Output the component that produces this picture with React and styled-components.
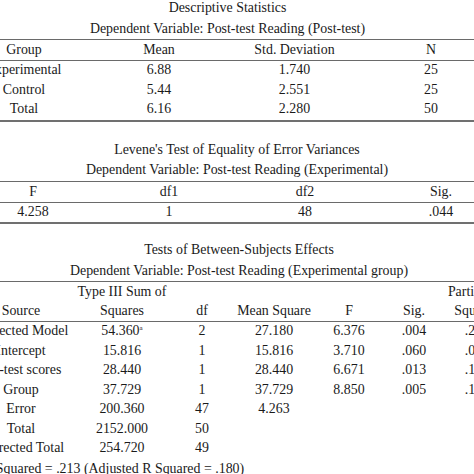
import React from "react";
import styled, { createGlobalStyle } from "styled-components";

const GlobalStyle = createGlobalStyle`
  html, body {
    margin: 0;
    padding: 0;
    background: #ffffff;
    overflow: hidden;
  }
  body {
    font-family: "Liberation Serif", "Times New Roman", serif;
    font-size: 13.9px;
    color: #1a1a1a;
  }
`;

const Page = styled.div`
  width: 474px;
  height: 474px;
  overflow: hidden;
  display: flex;
  flex-direction: column;
`;

const Section = styled.section`
  flex: none;
  width: ${(p) => p.$width}px;
  margin-left: ${(p) => p.$offset}px;
  margin-top: ${(p) => p.$gap}px;
`;

const Title = styled.div`
  text-align: center;
  line-height: 20.5px;
  white-space: nowrap;
`;

const Table = styled.table`
  width: 100%;
  border-collapse: collapse;
  table-layout: fixed;
`;

const Th = styled.th`
  font-weight: normal;
  padding: 0 0 1px;
  line-height: 19px;
  text-align: center;
  vertical-align: bottom;
  white-space: nowrap;
  border-top: 1px solid #6a6a6a;
  border-bottom: 1px solid #6a6a6a;
`;

const Td = styled.td`
  padding: 0 0 1.5px;
  height: 18px;
  line-height: 18px;
  text-align: center;
  white-space: nowrap;
  border-bottom: ${(p) => (p.$last ? "2px solid #707070" : "none")};
`;

const Sup = styled.sup`
  font-size: 7px;
  vertical-align: 5px;
  line-height: 0;
`;

const Footnote = styled.div`
  line-height: 19.5px;
  white-space: nowrap;
`;

const descriptive = [
  ["Experimental", "6.88", "1.740", "25"],
  ["Control", "5.44", "2.551", "25"],
  ["Total", "6.16", "2.280", "50"],
];

const effects = [
  ["Corrected Model", <>54.360<Sup>a</Sup></>, "2", "27.180", "6.376", ".004", ".213"],
  ["Intercept", "15.816", "1", "15.816", "3.710", ".060", ".073"],
  ["Pre-test scores", "28.440", "1", "28.440", "6.671", ".013", ".124"],
  ["Group", "37.729", "1", "37.729", "8.850", ".005", ".158"],
  ["Error", "200.360", "47", "4.263", "", "", ""],
  ["Total", "2152.000", "50", "", "", "", ""],
  ["Corrected Total", "254.720", "49", "", "", "", ""],
];

function Cols({ widths }) {
  return (
    <colgroup>
      {widths.map((w, i) => (
        <col key={i} style={{ width: w }} />
      ))}
    </colgroup>
  );
}

export default function App() {
  return (
    <Page>
      <GlobalStyle />

      <Section $width={543} $offset={-44} $gap={-2}>
        <Title>Descriptive Statistics</Title>
        <Title>Dependent Variable: Post-test Reading (Post-test)</Title>
        <Table>
          <Cols widths={[136, 134, 137, 136]} />
          <thead>
            <tr>
              <Th>Group</Th>
              <Th>Mean</Th>
              <Th>Std. Deviation</Th>
              <Th>N</Th>
            </tr>
          </thead>
          <tbody>
            {descriptive.map((r, i) => (
              <tr key={i}>
                {r.map((c, j) => (
                  <Td key={j} $last={i === descriptive.length - 1}>
                    {c}
                  </Td>
                ))}
              </tr>
            ))}
          </tbody>
        </Table>
      </Section>

      <Section $width={544} $offset={-35} $gap={18}>
        <Title>Levene's Test of Equality of Error Variances</Title>
        <Title>Dependent Variable: Post-test Reading (Experimental)</Title>
        <Table>
          <Cols widths={[136, 136, 136, 136]} />
          <thead>
            <tr>
              <Th>F</Th>
              <Th>df1</Th>
              <Th>df2</Th>
              <Th>Sig.</Th>
            </tr>
          </thead>
          <tbody>
            <tr>
              <Td $last>4.258</Td>
              <Td $last>1</Td>
              <Td $last>48</Td>
              <Td $last>.044</Td>
            </tr>
          </tbody>
        </Table>
      </Section>

      <Section $width={538} $offset={-30} $gap={16}>
        <Title>Tests of Between-Subjects Effects</Title>
        <Title>Dependent Variable: Post-test Reading (Experimental group)</Title>
        <Table>
          <Cols widths={[102, 100, 60, 84, 66, 64, 62]} />
          <thead>
            <tr>
              <Th>Source</Th>
              <Th>
                Type III Sum of
                <br />
                Squares
              </Th>
              <Th>df</Th>
              <Th>Mean Square</Th>
              <Th>F</Th>
              <Th>Sig.</Th>
              <Th>
                Partial Eta
                <br />
                Squared
              </Th>
            </tr>
          </thead>
          <tbody>
            {effects.map((r, i) => (
              <tr key={i}>
                {r.map((c, j) => (
                  <Td key={j}>{c}</Td>
                ))}
              </tr>
            ))}
          </tbody>
        </Table>
        <Footnote>a. R Squared = .213 (Adjusted R Squared = .180)</Footnote>
      </Section>
    </Page>
  );
}
